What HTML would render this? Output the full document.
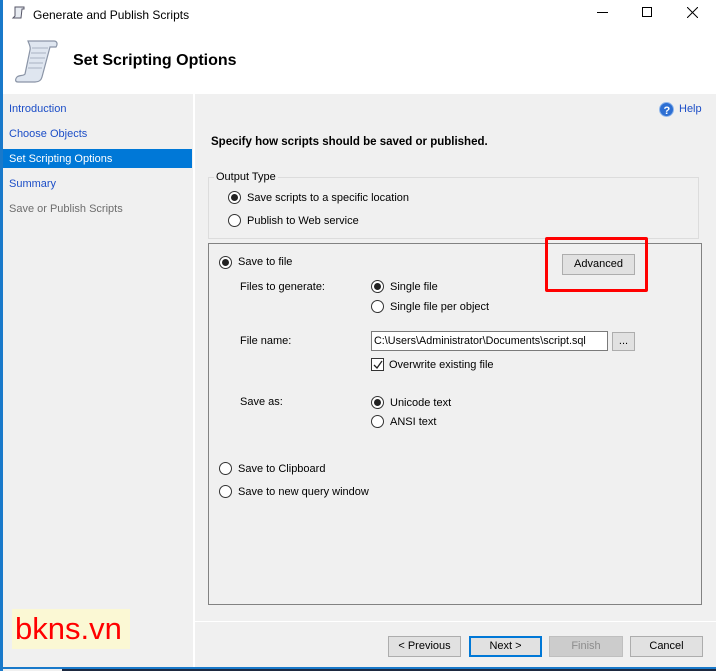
<!DOCTYPE html>
<html><head><meta charset="utf-8"><style>
*{box-sizing:border-box;margin:0;padding:0}
body{width:716px;height:671px;position:relative;overflow:hidden;background:#f0f0f0;font-family:"Liberation Sans",sans-serif;font-size:11px;color:#000}
.a{position:absolute;white-space:nowrap}
.r{position:absolute;width:13px;height:13px;border:1px solid #333;border-radius:50%;background:#fff}
.r.on::after{content:"";position:absolute;left:2px;top:2px;width:7px;height:7px;border-radius:50%;background:#222}
.btn{position:absolute;height:21px;border:1px solid #adadad;background:#e1e1e1;text-align:center;line-height:19px;font-size:11px}
.nav{position:absolute;left:9px;color:#1c4ec7;font-size:11px}
</style></head><body>
<div class="a" style="left:0;top:0;width:716px;height:94px;background:#fff"></div>
<div class="a" style="left:0;top:0;width:3px;height:671px;background:#1979ca"></div>
<div class="a" style="left:0;top:667px;width:716px;height:2px;background:#1979ca"></div>
<div class="a" style="left:62px;top:669px;width:654px;height:2px;background:#1d2940"></div>
<svg class="a" style="left:11px;top:5px" width="16" height="16" viewBox="0 0 16 16"><path d="M4 2h9v2h-2l-1 9H2l2-2z" fill="#e8ecf2" stroke="#556" stroke-width="1"/></svg>
<div class="a" style="left:33px;top:8px;font-size:12px">Generate and Publish Scripts</div>
<div class="a" style="left:597px;top:12px;width:11px;height:1px;background:#000"></div>
<div class="a" style="left:642px;top:7px;width:10px;height:10px;border:1px solid #000"></div>
<svg class="a" style="left:687px;top:7px" width="11" height="11"><path d="M0 0L11 11M11 0L0 11" stroke="#000" stroke-width="1"/></svg>
<svg class="a" style="left:14px;top:38px" width="44" height="45" viewBox="0 0 44 45"><path d="M14 3h26c3 0 4 3 2 6h-6l-8 30c-1 4-4 5-7 5H4c-3 0-3-3-1-5 2-2 7-1 8-3l5-24c1-3-1-6-2-9z" fill="#dfe6f0" stroke="#8a94a6" stroke-width="1.2"/><path d="M18 10h16M17 15h15M16 20h15M15 25h14M14 30h14" stroke="#a8b2c2" stroke-width="1"/></svg>
<div class="a" style="left:73px;top:52px;font-size:16px;font-weight:bold">Set Scripting Options</div>
<div class="a" style="left:3px;top:94px;width:190px;height:573px;background:#f0f0f0"></div>
<div class="a" style="left:193px;top:94px;width:2px;height:573px;background:#fff"></div>
<div class="nav a" style="top:103px">Introduction</div>
<div class="nav a" style="top:128px">Choose Objects</div>
<div class="a" style="left:3px;top:149px;width:189px;height:19px;background:#0078d7"></div>
<div class="a" style="left:9px;top:153px;color:#fff">Set Scripting Options</div>
<div class="nav a" style="top:178px">Summary</div>
<div class="a" style="left:9px;top:203px;color:#6d6d6d">Save or Publish Scripts</div>
<div class="a" style="left:12px;top:609px;width:118px;height:40px;background:#fbf8d4;color:#f00;font-size:31px;line-height:40px;padding-left:3px">bkns.vn</div>
<svg class="a" style="left:659px;top:102px" width="15" height="15"><circle cx="7.5" cy="7.5" r="7" fill="#2d6fd3" stroke="#8fb6ec"/><text x="4.5" y="12" font-size="11" font-weight="bold" fill="#fff" font-family="Liberation Sans">?</text></svg>
<div class="a" style="left:679px;top:103px;color:#1c4ec7">Help</div>
<div class="a" style="left:211px;top:136px;font-weight:bold;font-size:11.5px">Specify how scripts should be saved or published.</div>
<div class="a" style="left:208px;top:177px;width:491px;height:62px;border:1px solid #dcdcdc"></div>
<div class="a" style="left:214px;top:171px;background:#f0f0f0;padding:0 2px">Output Type</div>
<div class="r on" style="left:228px;top:191px"></div><div class="a" style="left:247px;top:192px">Save scripts to a specific location</div>
<div class="r" style="left:228px;top:214px"></div><div class="a" style="left:247px;top:215px">Publish to Web service</div>
<div class="a" style="left:208px;top:243px;width:494px;height:362px;border:1px solid #828282"></div>
<div class="r on" style="left:219px;top:256px"></div><div class="a" style="left:238px;top:256px">Save to file</div>
<div class="btn" style="left:562px;top:254px;width:73px">Advanced</div>
<div class="a" style="left:545px;top:237px;width:103px;height:55px;border:3px solid #f00;border-radius:2px"></div>
<div class="a" style="left:240px;top:281px">Files to generate:</div>
<div class="r on" style="left:371px;top:280px"></div><div class="a" style="left:390px;top:281px">Single file</div>
<div class="r" style="left:371px;top:300px"></div><div class="a" style="left:390px;top:301px">Single file per object</div>
<div class="a" style="left:240px;top:335px">File name:</div>
<div class="a" style="left:371px;top:331px;width:237px;height:20px;border:1px solid #7a7a7a;background:#fff;padding:3px 0 0 2px;font-size:10.8px;overflow:hidden">C:\Users\Administrator\Documents\script.sql</div>
<div class="btn" style="left:612px;top:332px;width:23px;height:19px;line-height:17px">...</div>
<div class="a" style="left:371px;top:358px;width:13px;height:13px;border:1px solid #333;background:#fff"></div>
<svg class="a" style="left:373px;top:360px" width="10" height="10"><path d="M1 5l3 3 5-7" fill="none" stroke="#222" stroke-width="1.3"/></svg>
<div class="a" style="left:389px;top:359px">Overwrite existing file</div>
<div class="a" style="left:240px;top:396px">Save as:</div>
<div class="r on" style="left:371px;top:396px"></div><div class="a" style="left:390px;top:397px">Unicode text</div>
<div class="r" style="left:371px;top:415px"></div><div class="a" style="left:390px;top:416px">ANSI text</div>
<div class="r" style="left:219px;top:462px"></div><div class="a" style="left:238px;top:463px">Save to Clipboard</div>
<div class="r" style="left:219px;top:485px"></div><div class="a" style="left:238px;top:486px">Save to new query window</div>
<div class="a" style="left:195px;top:621px;width:521px;height:1px;background:#fff"></div>
<div class="btn" style="left:388px;top:636px;width:73px">&lt; Previous</div>
<div class="btn" style="left:469px;top:636px;width:73px;border:2px solid #0078d7;line-height:17px">Next &gt;</div>
<div class="btn" style="left:549px;top:636px;width:74px;background:#ccc;border-color:#bfbfbf;color:#8d8d8d">Finish</div>
<div class="btn" style="left:630px;top:636px;width:73px">Cancel</div>
</body></html>
